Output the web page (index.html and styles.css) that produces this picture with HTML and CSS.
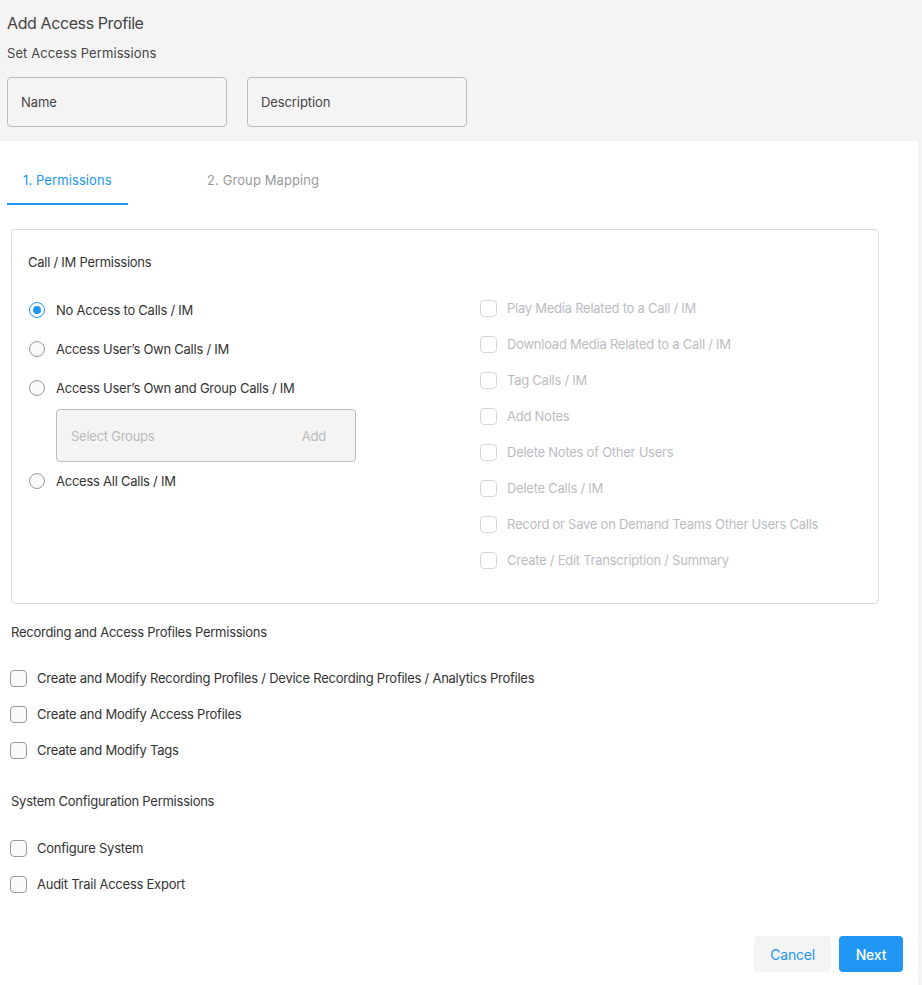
FILE: index.html
```html
<!DOCTYPE html>
<html lang="en">
<head>
  <meta charset="UTF-8" />
  <meta name="viewport" content="width=device-width, initial-scale=1.0" />
  <title>Add Access Profile</title>
  <link rel="stylesheet" href="styles.css">
</head>
<body>
  <div class="header">
    <h1 class="title">Add Access Profile</h1>
    <div class="subtitle">Set Access Permissions</div>
    <div class="fields">
      <input class="field" type="text" placeholder="Name" />
      <input class="field" type="text" placeholder="Description" />
    </div>
  </div>

  <div class="page">
    <div class="tabs">
      <div class="tab active">1. Permissions</div>
      <div class="tab">2. Group Mapping</div>
    </div>

    <div class="card">
      <div class="card-title">Call / IM Permissions</div>
      <div class="columns">
        <div class="col-left">
          <label class="radio-row"><input type="radio" name="calls" checked /> No Access to Calls / IM</label>
          <label class="radio-row"><input type="radio" name="calls" /> Access User’s Own Calls / IM</label>
          <label class="radio-row"><input type="radio" name="calls" /> Access User’s Own and Group Calls / IM</label>
          <div class="groups">
            <span>Select Groups</span>
            <span>Add</span>
          </div>
          <label class="radio-row"><input type="radio" name="calls" /> Access All Calls / IM</label>
        </div>
        <div class="col-right">
          <label class="check-row disabled"><input type="checkbox" disabled /> Play Media Related to a Call / IM</label>
          <label class="check-row disabled"><input type="checkbox" disabled /> Download Media Related to a Call / IM</label>
          <label class="check-row disabled"><input type="checkbox" disabled /> Tag Calls / IM</label>
          <label class="check-row disabled"><input type="checkbox" disabled /> Add Notes</label>
          <label class="check-row disabled"><input type="checkbox" disabled /> Delete Notes of Other Users</label>
          <label class="check-row disabled"><input type="checkbox" disabled /> Delete Calls / IM</label>
          <label class="check-row disabled"><input type="checkbox" disabled /> Record or Save on Demand Teams Other Users Calls</label>
          <label class="check-row disabled"><input type="checkbox" disabled /> Create / Edit Transcription / Summary</label>
        </div>
      </div>
    </div>

    <div class="section">
      <div class="section-title">Recording and Access Profiles Permissions</div>
      <label class="check-row"><input type="checkbox" /> Create and Modify Recording Profiles / Device Recording Profiles / Analytics Profiles</label>
      <label class="check-row"><input type="checkbox" /> Create and Modify Access Profiles</label>
      <label class="check-row"><input type="checkbox" /> Create and Modify Tags</label>
    </div>

    <div class="section">
      <div class="section-title">System Configuration Permissions</div>
      <label class="check-row"><input type="checkbox" /> Configure System</label>
      <label class="check-row"><input type="checkbox" /> Audit Trail Access Export</label>
    </div>

    <div class="actions">
      <button class="btn btn-cancel">Cancel</button>
      <button class="btn btn-next">Next</button>
    </div>
  </div>
</body>
</html>
```

FILE: styles.css
```css
body {
  margin: 0;
  font-family: Inter, "Noto Sans", sans-serif;
  font-size: 13px;
  letter-spacing: -0.25px;
  color: #333;
  background-color: #f4f4f6;
}
.header {
  background-color: #f4f4f4;
  padding: 13px 7px 14px;
}
.title {
  margin: 0;
  font-size: 16px;
  font-weight: normal;
  line-height: 20px;
  letter-spacing: -0.4px;
  color: #444;
}
.subtitle {
  margin-top: 11px;
  line-height: 18px;
  letter-spacing: 0.1px;
  color: #444;
}
.fields {
  display: flex;
  gap: 20px;
  margin-top: 15px;
}
.field {
  width: 220px;
  height: 50px;
  box-sizing: border-box;
  padding: 0 13px;
  border: 1px solid #bdbdbd;
  border-radius: 4px;
  background-color: transparent;
  font-family: inherit;
  font-size: 13px;
  letter-spacing: -0.1px;
}
.field::placeholder {
  color: #444;
}
.page {
  width: 918px;
  min-height: 844px;
  background-color: #fff;
  padding-top: 16px;
  box-sizing: border-box;
}
.tabs {
  display: flex;
  margin-left: 7px;
}
.tab {
  width: 121px;
  box-sizing: border-box;
  height: 48px;
  line-height: 46px;
  padding-left: 16px;
  letter-spacing: 0.1px;
  color: #999;
  border-bottom: 2px solid transparent;
}
.tab + .tab {
  width: auto;
  margin-left: 63px;
}
.tab.active {
  color: #2196f3;
  border-bottom-color: #2196f3;
}
.card {
  margin: 24px 0 0 11px;
  width: 868px;
  box-sizing: border-box;
  border: 1px solid #dcdcdc;
  border-radius: 4px;
  padding: 23px 16px 32px;
}
.card-title {
  line-height: 18px;
}
.columns {
  display: flex;
  margin-top: 28px;
}
.col-left {
  width: 452px;
}
.col-right {
  display: flex;
  flex-direction: column;
  margin-top: -2px;
}
.col-right .check-row:last-child {
  margin-bottom: 0;
}
.radio-row {
  display: flex;
  align-items: center;
  gap: 11px;
  height: 22px;
  margin-bottom: 17px;
  padding-left: 1px;
}
input[type="radio"] {
  appearance: none;
  margin: 0;
  width: 16px;
  height: 16px;
  border: 1px solid #999;
  border-radius: 50%;
  background-color: #fafafa;
  display: flex;
  align-items: center;
  justify-content: center;
}
input[type="radio"]:checked {
  border-color: #2196f3;
  background-color: #fff;
}
input[type="radio"]:checked::after {
  content: "";
  width: 8px;
  height: 8px;
  border-radius: 50%;
  background-color: #2196f3;
}
.groups {
  display: flex;
  justify-content: space-between;
  align-items: center;
  margin: -7px 0 8px 28px;
  width: 300px;
  height: 53px;
  box-sizing: border-box;
  padding: 0 29px 0 14px;
  background-color: #f4f4f4;
  border: 1px solid #bdbdbd;
  border-radius: 4px;
  color: #bbb;
}
.check-row {
  display: flex;
  align-items: center;
  gap: 10px;
  height: 22px;
  margin-bottom: 14px;
}
input[type="checkbox"] {
  appearance: none;
  margin: 0;
  width: 17px;
  height: 17px;
  box-sizing: border-box;
  border: 1px solid #999;
  border-radius: 4px;
  background-color: #fafafa;
}
.check-row.disabled {
  color: #bcbcc2;
}
.check-row.disabled input {
  border-color: #d6d6da;
  background-color: #fff;
}
.section {
  margin: 19px 0 0 10px;
}
.section-title {
  margin-left: 1px;
  line-height: 18px;
  margin-bottom: 26px;
}
.section + .section {
  margin-top: 31px;
}
.section + .section .section-title {
  margin-bottom: 27px;
}
.actions {
  display: flex;
  justify-content: flex-end;
  gap: 8px;
  margin: 41px 15px 0 0;
}
.btn {
  height: 36px;
  border: none;
  border-radius: 4px;
  font-family: inherit;
  font-size: 14px;
  letter-spacing: -0.2px;
  padding: 0 16px;
}
.btn-cancel {
  background-color: #f4f4f4;
  color: #2196f3;
}
.btn-next {
  min-width: 64px;
  background-color: #2196f3;
  color: #fff;
  font-weight: 500;
}
```
